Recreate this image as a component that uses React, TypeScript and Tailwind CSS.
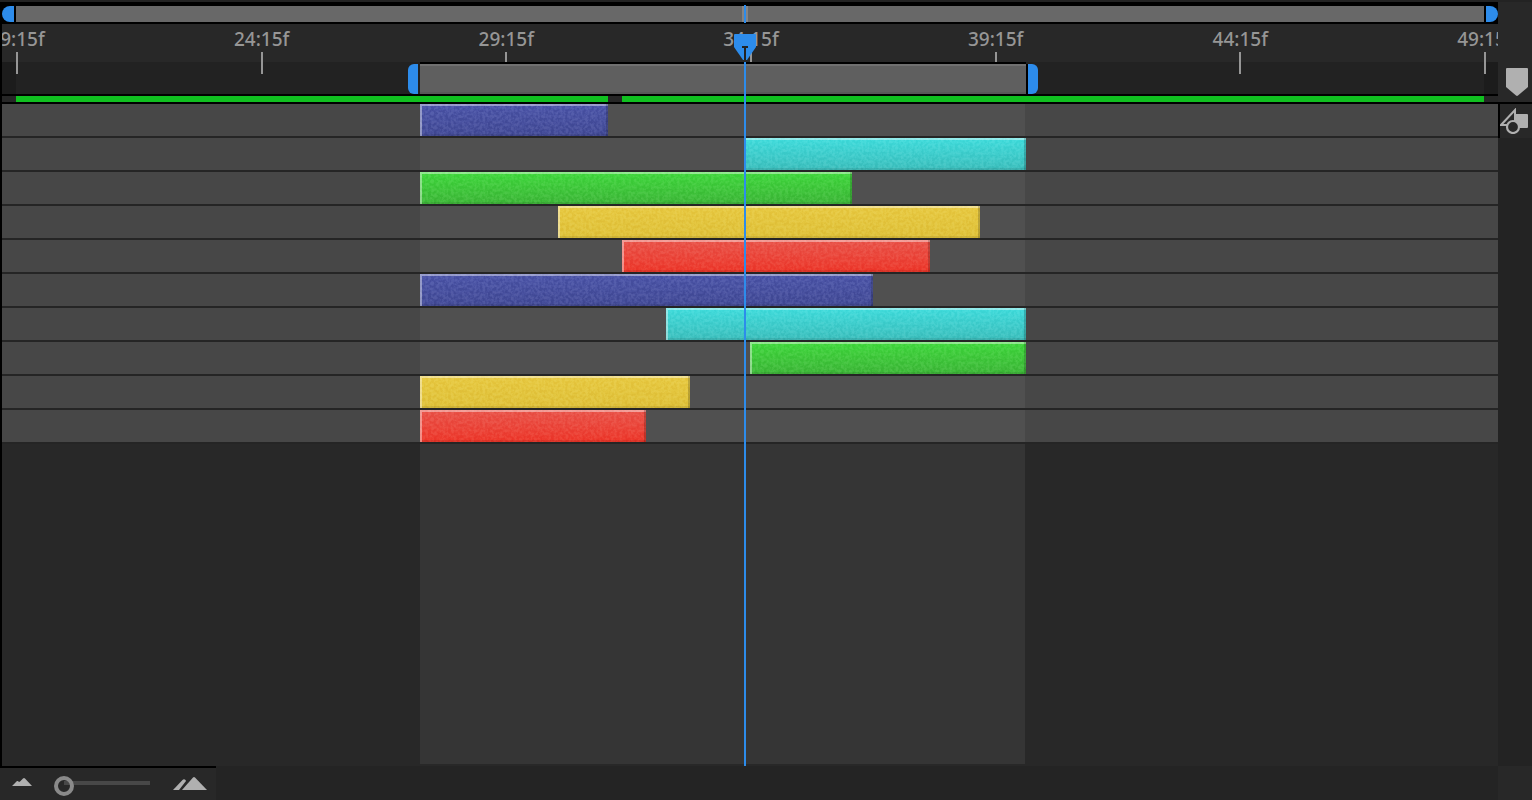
import clsx from "clsx";

// Horizontal positions are in timeline units, converted to a share of the visible span.
const SPAN = 1496;
const pct = (units: number) => `${(units / SPAN) * 100}%`;

const workArea = { start: 418, end: 1024 };
const playhead = 742;

const ticks = ["19:15f", "24:15f", "29:15f", "34:15f", "39:15f", "44:15f", "49:15f"];

const clipColors = {
  blue: "bg-linear-to-b from-[#4f58ab] to-[#454d98]",
  cyan: "bg-linear-to-b from-[#42dddd] to-[#3fc0be]",
  green: "bg-linear-to-b from-[#42d93f] to-[#40b83b]",
  yellow: "bg-linear-to-b from-[#e8ca43] to-[#dfc23b]",
  red: "bg-linear-to-b from-[#e9564c] to-[#ed382b]",
};

type Layer = { name: string; color: keyof typeof clipColors; start: number; end: number };

const layers: Layer[] = [
  { name: "Layer 1", color: "blue", start: 418, end: 606 },
  { name: "Layer 2", color: "cyan", start: 742, end: 1024 },
  { name: "Layer 3", color: "green", start: 418, end: 850 },
  { name: "Layer 4", color: "yellow", start: 556, end: 978 },
  { name: "Layer 5", color: "red", start: 620, end: 928 },
  { name: "Layer 6", color: "blue", start: 418, end: 871 },
  { name: "Layer 7", color: "cyan", start: 664, end: 1024 },
  { name: "Layer 8", color: "green", start: 748, end: 1024 },
  { name: "Layer 9", color: "yellow", start: 418, end: 688 },
  { name: "Layer 10", color: "red", start: 418, end: 644 },
];

function Clip({ layer }: { layer: Layer }) {
  return (
    <button
      type="button"
      aria-label={layer.name}
      className={clsx("relative z-10 h-8 overflow-hidden", clipColors[layer.color])}
      style={{ marginLeft: pct(layer.start), width: pct(layer.end - layer.start) }}
    >
      <svg className="absolute inset-0 h-full w-full opacity-15 mix-blend-soft-light" aria-hidden="true">
        <rect width="100%" height="100%" filter="url(#grain)" />
      </svg>
      <span className="absolute inset-0 shadow-[inset_-2px_0_0_rgba(0,0,0,0.18),inset_2px_2px_0_rgba(255,255,255,0.42),inset_0_-2px_0_rgba(0,0,0,0.08)]" />
    </button>
  );
}

function Navigator() {
  return (
    <div className="flex h-[22px] gap-0.5 bg-black pt-1 pb-0.5">
      <button type="button" aria-label="Navigator start" className="w-3 rounded-l-full bg-[#2d8ceb]" />
      <div className="flex-1 bg-[#686868]" />
      <button type="button" aria-label="Navigator end" className="w-3 rounded-r-full bg-[#2d8ceb]" />
    </div>
  );
}

function Ruler() {
  return (
    <div className="overflow-hidden">
      <div className="flex h-[38px] justify-between bg-[#282828] pr-3 pl-3.5">
        {ticks.map((label) => (
          <div key={label} className="relative flex w-0.5 flex-col items-center">
            <span className="mt-0.5 h-[26px] text-[19px] leading-[26px] font-medium text-[#969696]">{label}</span>
            <span className="h-[22px] w-0.5 shrink-0 bg-[#969696]" />
          </div>
        ))}
      </div>
      <div className="h-8 border-x-14 border-[#1c1c1c] bg-[#222]">
        <div className="relative z-10 -mx-3.5 flex h-8">
          <div style={{ width: pct(workArea.start) }} className="flex justify-end pt-0.5 pr-0.5">
            <button type="button" aria-label="Work area start" className="w-2.5 rounded-l-md bg-[#2d8ceb]" />
          </div>
          <div className="border-t-2 border-black" style={{ width: pct(workArea.end - workArea.start) }}>
            <div className="h-full border-y-2 border-t-[#707070] border-b-[#585858] bg-[#5f5f5f]" />
          </div>
          <div className="flex pt-0.5">
            <div className="w-0.5 bg-black" />
            <button type="button" aria-label="Work area end" className="w-2.5 rounded-r-md bg-[#2d8ceb]" />
          </div>
        </div>
      </div>
    </div>
  );
}

function CacheBar() {
  return (
    <div className="flex h-2.5 border-y-2 border-black bg-[#262626] px-3.5">
      <div className="bg-[#10c020]" style={{ flex: 592 }} />
      <div style={{ flex: 14 }} />
      <div className="bg-[#10c020]" style={{ flex: 862 }} />
    </div>
  );
}

function WorkAreaShade({ className }: { className: string }) {
  return (
    <div
      className={className}
      style={{ marginLeft: pct(workArea.start), width: pct(workArea.end - workArea.start - 1) }}
    />
  );
}

function Playhead() {
  return (
    <div className="pointer-events-none absolute inset-y-0 z-20 w-0.5" style={{ left: pct(playhead) }}>
      <div className="absolute top-1 -left-0.5 h-4 w-1.5 bg-[#858585]" />
      <div className="absolute top-[3px] h-[18px] w-0.5 bg-[#2d8ceb]" />
      <svg className="absolute top-8 -left-2.5 h-7 w-[22px]" viewBox="0 0 22 28" aria-hidden="true">
        <path d="M0 1Q0 0 1 0H21Q22 0 22 1V13L13 26H9L0 13Z" fill="#2d8ceb" />
        <path d="M8 12H14V14H12V26H10V14H8Z" fill="#222" />
      </svg>
      <div className="absolute top-[60px] bottom-0 w-0.5 bg-[#2d8ceb]" />
    </div>
  );
}

function SideBar() {
  return (
    <aside className="flex w-[34px] flex-col bg-[#232323]">
      <button
        type="button"
        aria-label="Add marker"
        className="flex h-[102px] items-end justify-end border-b-2 border-black bg-[#282828] pr-1 pb-1"
      >
        <svg className="h-[30px] w-[22px]" viewBox="0 0 22 30" aria-hidden="true">
          <path d="M0 1Q0 0 1 0H21Q22 0 22 1V19L12 27.5Q11 28.3 10 27.5L0 19Z" fill="#b0b0b0" />
        </svg>
      </button>
      <button
        type="button"
        aria-label="Composition button"
        className="flex h-[34px] items-center justify-end border-l-2 border-black bg-[#282828] pr-1"
      >
        <svg className="h-[26px] w-7" viewBox="0 0 28 26" aria-hidden="true">
          <path d="M15 6H27Q28 6 28 7V19Q28 20 27 20H15Z" fill="#b0b0b0" />
          <path d="M1 17L15 2V17Z" fill="#282828" stroke="#b0b0b0" strokeWidth="2" />
          <path d="M16 6V20H19Q22 16 18 13Z" fill="#b0b0b0" />
          <circle cx="13" cy="19" r="6" fill="#282828" stroke="#b0b0b0" strokeWidth="2.2" />
        </svg>
      </button>
    </aside>
  );
}

function ZoomControls() {
  return (
    <footer className="flex h-[34px] bg-[#242424]">
      <div className="flex w-[216px] items-start border-t-2 border-black bg-[#282828] pl-3">
        <button type="button" aria-label="Zoom out" className="mt-2">
          <svg className="h-2.5 w-5" viewBox="0 0 20 10" aria-hidden="true">
            <path d="M0 10L5 5Q6 4.5 7 6L8 5.5L11 2.5Q12 1.5 13 2.5L20 10Z" fill="#b0b0b0" />
          </svg>
        </button>
        <input
          type="range"
          aria-label="Zoom level"
          min={0}
          max={100}
          defaultValue={0}
          className="mt-[3px] ml-[22px] h-6 w-24 appearance-none bg-transparent [&::-webkit-slider-runnable-track]:h-1 [&::-webkit-slider-runnable-track]:bg-[linear-gradient(to_right,transparent_10px,#484848_10px)] [&::-webkit-slider-thumb]:-mt-[5px] [&::-webkit-slider-thumb]:size-5 [&::-webkit-slider-thumb]:appearance-none [&::-webkit-slider-thumb]:rounded-full [&::-webkit-slider-thumb]:border-4 [&::-webkit-slider-thumb]:border-[#8a8a8a]"
        />
        <button type="button" aria-label="Zoom in" className="mt-2 ml-[23px]">
          <svg className="h-3.5 w-[34px]" viewBox="0 0 34 14" aria-hidden="true">
            <path d="M0 14L9.5 4Q11 2.5 12.5 4L13 5L6 14Z" fill="#b0b0b0" />
            <path d="M9 14L20 1.5Q21 .5 22 1.5L34 14Z" fill="#b0b0b0" />
          </svg>
        </button>
      </div>
      <div className="ml-auto w-[34px] bg-[#282828]" />
    </footer>
  );
}

export default function App() {
  return (
    <div className="flex h-screen flex-col bg-[#232323] font-['Noto_Sans','Open_Sans',sans-serif]">
      {/* Fine grey grain laid over every clip */}
      <svg className="absolute size-0" aria-hidden="true">
        <filter id="grain" x="0" y="0" width="100%" height="100%" colorInterpolationFilters="sRGB">
          <feTurbulence type="fractalNoise" baseFrequency="0.35" numOctaves="2" seed="4" />
          <feColorMatrix values="3 0 0 0 -1  3 0 0 0 -1  3 0 0 0 -1  0 0 0 0 1" />
        </filter>
      </svg>

      <div className="flex min-h-0 flex-1 pt-0.5">
        <main className="flex min-w-0 flex-1 border-l-2 border-black">
          <div className="relative flex min-w-0 flex-1 flex-col bg-[#282828]">
            <Navigator />
            <Ruler />
            <CacheBar />
            {layers.map((layer) => (
              <div
                key={layer.name}
                className="grid h-[34px] shrink-0 grid-cols-1 border-b-2 border-[#252525] bg-[#474747] *:[grid-area:1/1]"
              >
                <WorkAreaShade className="h-8 bg-[#505050]" />
                <Clip layer={layer} />
              </div>
            ))}
            <WorkAreaShade className="mb-0.5 flex-1 bg-[#353535]" />
            <Playhead />
          </div>
        </main>
        <SideBar />
      </div>

      <ZoomControls />
    </div>
  );
}
